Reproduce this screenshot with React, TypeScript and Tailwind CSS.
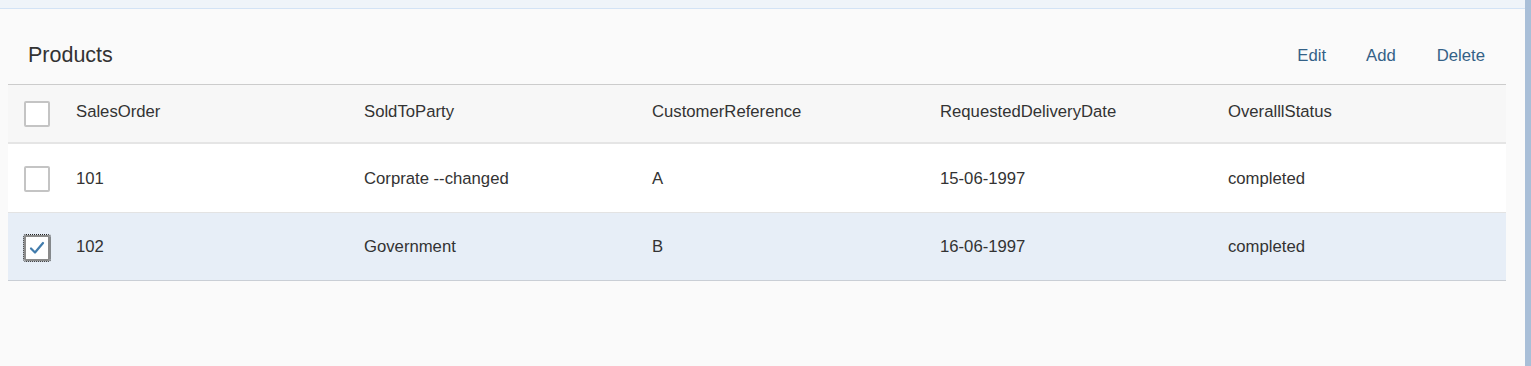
import type { ReactNode } from 'react';

type Row = {
  salesOrder: string;
  soldToParty: string;
  customerReference: string;
  requestedDeliveryDate: string;
  overallStatus: string;
  selected: boolean;
};

const rows: Row[] = [
  {
    salesOrder: '101',
    soldToParty: 'Corprate --changed',
    customerReference: 'A',
    requestedDeliveryDate: '15-06-1997',
    overallStatus: 'completed',
    selected: false,
  },
  {
    salesOrder: '102',
    soldToParty: 'Government',
    customerReference: 'B',
    requestedDeliveryDate: '16-06-1997',
    overallStatus: 'completed',
    selected: true,
  },
];

const columns = ['SalesOrder', 'SoldToParty', 'CustomerReference', 'RequestedDeliveryDate', 'OveralllStatus'];

function Checkbox({ checked }: { checked?: boolean }): ReactNode {
  return (
    <div
      className={
        checked
          ? 'flex h-[28px] w-[28px] items-center justify-center rounded-[3px] outline outline-1 outline-dotted outline-[#222] outline-offset-[-1px]'
          : 'flex h-[28px] w-[28px] items-center justify-center'
      }
    >
      <div
        className={
          checked
            ? 'flex h-[26px] w-[26px] items-center justify-center rounded-[2px] border-2 border-[#8a8a8a] bg-white'
            : 'flex h-[26px] w-[26px] items-center justify-center rounded-[2px] border-2 border-[#c4c4c4] bg-white'
        }
      >
        {checked && (
          <svg width="16" height="16" viewBox="0 0 16 16" fill="none">
            <path d="M2 8.5 L6 12.5 L14 3" stroke="#427cac" strokeWidth="2.2" strokeLinecap="round" strokeLinejoin="round" />
          </svg>
        )}
      </div>
    </div>
  );
}

export default function App(): ReactNode {
  return (
    <div className="flex h-[366px] w-full bg-[#fafafa] font-['Liberation_Sans',Arial,sans-serif] text-[#333]">
      <div className="flex flex-1 flex-col">
        <div className="h-[9px] border-b border-[#d3e3f5] bg-[#eff4f9]" />
        <div className="pl-[8px] pr-[19px]">
          <div className="flex h-[75px] items-center justify-between pl-[20px] pr-[14px] pt-[19px]">
            <h2 className="text-[21.5px] leading-none text-[#333]">Products</h2>
            <div className="flex items-center text-[16.7px] text-[#346187]">
              <button className="px-[7px]">Edit</button>
              <button className="ml-[26px] px-[7px]">Add</button>
              <button className="ml-[27px] px-[7px]">Delete</button>
            </div>
          </div>

          <div className="flex h-[60px] items-center border-t border-b-2 border-t-[#cccccc] border-b-[#e5e5e5] bg-[#f7f7f7] pb-[4px] text-[16.7px]">
            <div className="flex w-[56px] shrink-0 justify-center pl-[2px] pt-[4px]">
              <Checkbox />
            </div>
            {columns.map((c) => (
              <div key={c} className="w-[288px] shrink-0 px-[12px]">
                {c}
              </div>
            ))}
          </div>

          {rows.map((r, i) => (
            <div
              key={r.salesOrder}
              className={
                r.selected
                  ? 'flex h-[68px] items-center border-b border-[#c9ced5] bg-[#e7eef7] text-[16.7px]'
                  : 'flex h-[69px] items-center border-b border-[#e3e3e3] bg-white pt-[2px] text-[16.7px]'
              }
            >
              <div className={i === 0 ? 'flex w-[56px] shrink-0 justify-center pl-[2px]' : 'flex w-[56px] shrink-0 justify-center pl-[2px] pt-[2px]'}>
                <Checkbox checked={r.selected} />
              </div>
              <div className="w-[288px] shrink-0 px-[12px]">{r.salesOrder}</div>
              <div className="w-[288px] shrink-0 px-[12px]">{r.soldToParty}</div>
              <div className="w-[288px] shrink-0 px-[12px]">{r.customerReference}</div>
              <div className="w-[288px] shrink-0 px-[12px]">{r.requestedDeliveryDate}</div>
              <div className="w-[288px] shrink-0 px-[12px]">{r.overallStatus}</div>
            </div>
          ))}
        </div>
      </div>
      <div className="w-[6px] shrink-0 bg-[#a9bfd8]" />
    </div>
  );
}
